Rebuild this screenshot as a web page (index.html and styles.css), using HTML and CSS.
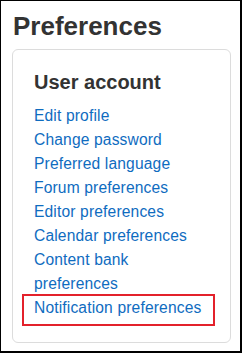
FILE: index.html
```html
<!DOCTYPE html>
<html lang="en">
<head>
    <meta charset="UTF-8">
    <title>Preferences</title>
    <link rel="stylesheet" href="styles.css">
</head>
<body>
<div class="page">
    <h2 class="page-title">Preferences</h2>
    <div class="card">
        <h3 class="card-title">User account</h3>
        <ul class="pref-list">
            <li><a href="#">Edit profile</a></li>
            <li><a href="#">Change password</a></li>
            <li><a href="#">Preferred language</a></li>
            <li><a href="#">Forum preferences</a></li>
            <li><a href="#">Editor preferences</a></li>
            <li><a href="#">Calendar preferences</a></li>
            <li><a href="#">Content bank preferences</a></li>
            <li class="highlight"><a href="#">Notification preferences</a></li>
        </ul>
    </div>
</div>
</body>
</html>
```

FILE: styles.css
```css
html, body {
    margin: 0;
    padding: 0;
    background: #fff;
}

body {
    font-family: "Liberation Sans", Arial, sans-serif;
    color: #333;
}

.page {
    box-sizing: border-box;
    width: 242px;
    height: 353px;
    border-top: 1px solid #000;
    border-left: 1px solid #000;
    border-right: 2px solid #000;
    border-bottom: 2px solid #000;
    padding: 10px 9px 0 11px;
    overflow: hidden;
}

.page-title {
    margin: 0 0 7px 1px;
    font-size: 26px;
    font-weight: bold;
    line-height: 1.2;
    color: #333;
}

.card {
    border: 1px solid #dcdcdc;
    border-radius: 6px;
    padding: 20px 20px 22px 21px;
}

.card-title {
    margin: 0 0 10px 0;
    font-size: 20px;
    font-weight: bold;
    line-height: 1.2;
    color: #333;
}

.pref-list {
    list-style: none;
    margin: 0;
    padding: 0;
    font-size: 15.6px;
    letter-spacing: 0.15px;
    line-height: 24px;
}

.pref-list a {
    color: #0f6cbf;
    text-decoration: none;
}

.highlight {
    position: relative;
}

.highlight::after {
    content: "";
    position: absolute;
    left: -12px;
    right: -5px;
    top: -2px;
    bottom: -6px;
    border: 2px solid #e3212b;
}
```
